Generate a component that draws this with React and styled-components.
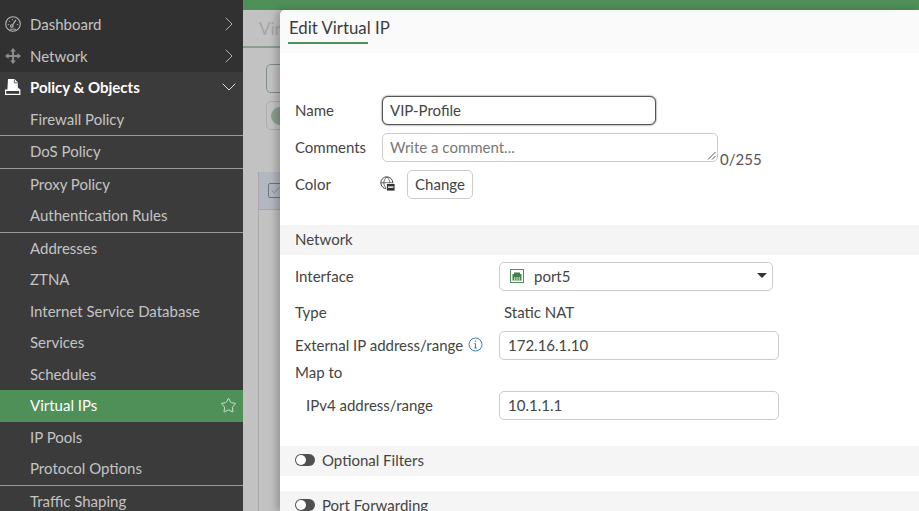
import React from "react";
import styled, { createGlobalStyle } from "styled-components";
import { ChevronRight, ChevronDown, Star, Check } from "lucide-react";

const GlobalStyle = createGlobalStyle`
  html, body {
    margin: 0;
    height: 511px;
    overflow: hidden;
    background: #fff;
    font-family: "Lato", "Liberation Sans", sans-serif;
  }
  * { box-sizing: border-box; }
`;

const Page = styled.div`
  display: flex;
  width: 919px;
  height: 511px;
  overflow: hidden;
`;

const Sidebar = styled.nav`
  flex: 0 0 243px;
  display: flex;
  flex-direction: column;
  background: #3b3b3b;
  overflow: hidden;
`;

const TopGroup = styled.div`
  background: #313131;
  padding-top: 9px;
`;

const NavRow = styled.div`
  flex: none;
  display: flex;
  align-items: center;
  height: ${(p) => (p.$line ? "32.5px" : "31.5px")};
  padding: 0 2px 1px ${(p) => (p.$sub ? "30px" : "5px")};
  font-size: 15px;
  color: ${(p) => (p.$active || p.$open ? "#fff" : "#c4c4c4")};
  font-weight: ${(p) => (p.$open ? 700 : 400)};
  background: ${(p) => (p.$active ? "#4f8f58" : "transparent")};
  border-bottom: ${(p) => (p.$line ? "1px solid #9a9a9a" : "none")};
`;

const NavIcon = styled.span`
  display: flex;
  width: 25px;
  color: ${(p) => p.$color};
`;

const NavLabel = styled.span`
  flex: 1;
`;

const Chevron = styled.span`
  display: flex;
  color: ${(p) => (p.$open ? "#e0e0e0" : "#b0b0b0")};
`;

const FavStar = styled.span`
  display: flex;
  margin-right: 4px;
  color: #e2f0e4;
`;

const Main = styled.main`
  flex: 1;
  position: relative;
  display: flex;
  flex-direction: column;
  background: #fff;
  overflow: hidden;
`;

const TopBar = styled.div`
  flex: 0 0 10px;
  background: #4f8f58;
`;

const TabBar = styled.div`
  flex: 0 0 38px;
  display: flex;
  align-items: center;
  padding-left: 16px;
  font-size: 17px;
  color: #d8dade;
  border-bottom: 2px solid #b5d0b8;
`;

const Toolbar = styled.div`
  display: flex;
  flex-direction: column;
  gap: 8px;
  padding: 16px 0 0 23px;
`;

const GhostButton = styled.div`
  width: 90px;
  height: 29px;
  border: 1px solid ${(p) => (p.$focus ? "#a8bcae" : "#e4e4e4")};
  border-radius: 5px;
  padding: 5px 4px;
`;

const GhostDot = styled.div`
  width: 18px;
  height: 18px;
  border-radius: 50%;
  background: #b5d3ba;
`;

const GhostTable = styled.div`
  margin: 42px 0 0 15px;
  flex: 1;
  border-left: 1px solid #dcdcdc;
  background: #fff;
`;

const GhostHead = styled.div`
  height: 38px;
  padding: 11px 0 0 9px;
  background: #ecf1fb;
  border-bottom: 1px solid #dcdcdc;
  border-radius: 3px 0 0 0;
`;

const GhostCheck = styled.div`
  display: flex;
  align-items: center;
  justify-content: center;
  width: 15px;
  height: 15px;
  color: #999;
  border: 1px solid #999;
  border-radius: 2px;
`;

const Backdrop = styled.div`
  position: absolute;
  inset: 10px 0 0 0;
  background: rgba(0, 0, 0, 0.24);
`;

const Modal = styled.section`
  position: absolute;
  top: 10px;
  left: 37px;
  right: 0;
  bottom: 0;
  display: flex;
  flex-direction: column;
  background: #fff;
  border-radius: 5px 0 0 0;
  box-shadow: -4px 0 7px rgba(0, 0, 0, 0.22);
  color: #444;
  font-size: 15px;
`;

const ModalHeader = styled.header`
  flex: 0 0 43px;
  display: flex;
  flex-direction: column;
  padding-left: 8px;
  background: #fafafa;
  border-radius: 5px 0 0 0;
`;

const Title = styled.h1`
  margin: 0;
  height: 32px;
  padding: 6px 0 0 1px;
  font-size: 16.8px;
  font-weight: 400;
  line-height: 24px;
  color: #3c3c3c;
`;

const TitleRule = styled.div`
  width: 80px;
  height: 2px;
  background: #4f8f58;
`;

const Form = styled.div`
  display: flex;
  flex-direction: column;
  padding-top: 43px;
`;

const Row = styled.div`
  display: flex;
  align-items: ${(p) => p.$align || "center"};
  height: ${(p) => p.$h}px;
  margin-bottom: ${(p) => p.$mb || 0}px;
  padding-left: 15px;
`;

const Label = styled.label`
  flex: 0 0 ${(p) => p.$w}px;
  display: flex;
  align-items: center;
  gap: 5px;
  padding-left: ${(p) => p.$indent || 0}px;
  padding-bottom: 2px;
  white-space: nowrap;
`;

const Field = styled.div`
  position: relative;
  display: flex;
  align-items: center;
  width: ${(p) => p.$w}px;
  height: 29px;
  padding: 0 7px 2px ${(p) => p.$pad || 7}px;
  background: #fff;
  border: 1px solid ${(p) => (p.$focus ? "#555" : "#ccc")};
  border-radius: ${(p) => (p.$focus ? 6 : 5)}px;
  box-shadow: ${(p) => (p.$focus ? "0 0 2px #444" : "none")};
  color: ${(p) => (p.$hint ? "#777" : "#444")};
`;

const Grip = styled.svg`
  position: absolute;
  right: 1px;
  bottom: 1px;
`;

const Counter = styled.span`
  align-self: flex-end;
  margin: 0 0 -6px 2px;
  color: #555;
`;

const ColorIcon = styled.svg`
  margin: 0 12px 2px 0;
  flex: none;
`;

const ChangeButton = styled.button`
  width: 66px;
  height: 29px;
  padding: 0 0 2px;
  background: #fff;
  border: 1px solid #ccc;
  border-radius: 5px;
  color: #444;
  font: inherit;
`;

const Band = styled.div`
  display: flex;
  align-items: center;
  gap: 7px;
  flex: none;
  height: 30px;
  margin-top: ${(p) => p.$mt || 0}px;
  margin-bottom: ${(p) => p.$mb || 0}px;
  padding: 0 0 2px 15px;
  background: #f5f5f5;
`;

const Toggle = styled.span`
  display: flex;
  align-items: center;
  width: 20px;
  height: 12px;
  padding: 1px;
  background: #505050;
  border-radius: 6px;
`;

const Knob = styled.span`
  width: 10px;
  height: 10px;
  background: #fff;
  border-radius: 50%;
`;

const PortName = styled.span`
  margin-left: 10px;
`;

const Caret = styled.span`
  margin-left: auto;
  margin-right: -2px;
  border-left: 5px solid transparent;
  border-right: 5px solid transparent;
  border-top: 5px solid #333;
`;

const PlainValue = styled.span`
  padding: 0 0 2px 5px;
`;

const DashboardIcon = () => (
  <svg width="16" height="16" viewBox="0 0 16 16" fill="none" stroke="currentColor" strokeWidth="1.1">
    <circle cx="8" cy="8" r="7.3" />
    <circle cx="6.8" cy="10" r="1.3" />
    <path d="M7.5 9L11 3.8" strokeWidth="1.2" />
    <path d="M2.8 8.6h1.3M4 5l1 .9M7.4 2.9v1.3M13.2 8.6h-1.3M5 13.2h6" strokeWidth="0.9" />
  </svg>
);

const NetworkIcon = () => (
  <svg width="16" height="16" viewBox="0 0 16 16" fill="currentColor">
    <path d="M8 0 L11 3.6 H9.1 V6.9 H12.4 V5 L16 8 L12.4 11 V9.1 H9.1 V12.4 H11 L8 16 L5 12.4 H6.9 V9.1 H3.6 V11 L0 8 L3.6 5 V6.9 H6.9 V3.6 H5 Z" />
  </svg>
);

const PolicyIcon = () => (
  <svg width="16" height="16" viewBox="0 0 16 16" fill="currentColor">
    <path d="M3 0H9.5L12.8 3.3V8.4L15.4 10.6V16H0V10.6H2.4Z" />
    <path d="M1.2 12H14.2V14.8H1.2Z" fill="#3b3b3b" />
    <path d="M9.4 0.6V3.8H12.6" fill="none" stroke="#3b3b3b" strokeWidth="0.8" />
  </svg>
);

const InfoIcon = () => (
  <svg width="15" height="15" viewBox="0 0 15 15" fill="none" stroke="#3f7fb5">
    <circle cx="7.5" cy="7.5" r="6.5" />
    <path d="M7.5 6.5V11M6.2 11h2.6M6.4 6.5h1.1" strokeWidth="1.1" />
    <circle cx="7.5" cy="4.2" r="0.7" fill="#3f7fb5" stroke="none" />
  </svg>
);

const PortIcon = () => (
  <svg width="14" height="14" viewBox="0 0 14 14">
    <rect x="0.5" y="0.5" width="13" height="13" fill="#fff" stroke="#4f8f58" />
    <path d="M2.5 11.5V5H4V3.5H10V5H11.5V11.5Z" fill="#3f7f49" />
    <path d="M4.5 11.5V8M6.2 11.5V8M7.9 11.5V8M9.6 11.5V8" stroke="#d8e8da" strokeWidth="0.8" />
  </svg>
);

const GlobeLockIcon = () => (
  <ColorIcon width="15" height="15" viewBox="0 0 15 15" fill="none" stroke="#444">
    <circle cx="6.8" cy="6.8" r="6" />
    <path d="M1 6.8h12M6.8 1c-4 3.5-4 8 0 11.6M6.8 1c4 3.5 4 8 0 11.6" strokeWidth="0.8" />
    <rect x="6.5" y="7.5" width="8.5" height="7.5" fill="#333" stroke="#fff" strokeWidth="0.8" />
    <rect x="8" y="10.4" width="5.5" height="1.4" fill="#fff" stroke="none" />
  </ColorIcon>
);

const ResizeGrip = () => (
  <Grip width="9" height="9" viewBox="0 0 9 9" stroke="#555">
    <path d="M1 8.5L8.5 1M5 8.5L8.5 5" />
  </Grip>
);

const subItems = [
  { label: "Firewall Policy", line: true },
  { label: "DoS Policy", line: true },
  { label: "Proxy Policy" },
  { label: "Authentication Rules", line: true },
  { label: "Addresses" },
  { label: "ZTNA" },
  { label: "Internet Service Database" },
  { label: "Services" },
  { label: "Schedules" },
  { label: "Virtual IPs", active: true },
  { label: "IP Pools" },
  { label: "Protocol Options", line: true },
  { label: "Traffic Shaping" },
];

const App = () => (
  <Page>
    <GlobalStyle />
    <Sidebar>
      <TopGroup>
        <NavRow>
          <NavIcon $color="#b8b8b8"><DashboardIcon /></NavIcon>
          <NavLabel>Dashboard</NavLabel>
          <Chevron><ChevronRight size={24} strokeWidth={1} /></Chevron>
        </NavRow>
        <NavRow>
          <NavIcon $color="#8c8c8c"><NetworkIcon /></NavIcon>
          <NavLabel>Network</NavLabel>
          <Chevron><ChevronRight size={24} strokeWidth={1} /></Chevron>
        </NavRow>
      </TopGroup>
      <NavRow $open>
        <NavIcon $color="#fff"><PolicyIcon /></NavIcon>
        <NavLabel>Policy &amp; Objects</NavLabel>
        <Chevron $open><ChevronDown size={24} strokeWidth={1} /></Chevron>
      </NavRow>
      {subItems.map((item) => (
        <NavRow key={item.label} $sub $line={item.line} $active={item.active}>
          <NavLabel>{item.label}</NavLabel>
          {item.active && <FavStar><Star size={17} strokeWidth={1.2} /></FavStar>}
        </NavRow>
      ))}
    </Sidebar>
    <Main>
      <TopBar />
      <TabBar>Vir</TabBar>
      <Toolbar>
        <GhostButton $focus />
        <GhostButton>
          <GhostDot />
        </GhostButton>
      </Toolbar>
      <GhostTable>
        <GhostHead>
          <GhostCheck><Check size={11} strokeWidth={1.5} /></GhostCheck>
        </GhostHead>
      </GhostTable>
      <Backdrop />
      <Modal>
        <ModalHeader>
          <Title>Edit Virtual IP</Title>
          <TitleRule />
        </ModalHeader>
        <Form>
          <Row $h={29} $mb={8}>
            <Label $w={87}>Name</Label>
            <Field $w={274} $focus>VIP-Profile</Field>
          </Row>
          <Row $h={29} $mb={8}>
            <Label $w={87}>Comments</Label>
            <Field $w={336} $hint>Write a comment...<ResizeGrip /></Field>
            <Counter>0/255</Counter>
          </Row>
          <Row $h={29} $mb={26}>
            <Label $w={85}>Color</Label>
            <GlobeLockIcon />
            <ChangeButton>Change</ChangeButton>
          </Row>
          <Band $mb={7}>Network</Band>
          <Row $h={29} $mb={7}>
            <Label $w={204}>Interface</Label>
            <Field $w={274} $pad={10}>
              <PortIcon />
              <PortName>port5</PortName>
              <Caret />
            </Field>
          </Row>
          <Row $h={29} $mb={4}>
            <Label $w={204}>Type</Label>
            <PlainValue>Static NAT</PlainValue>
          </Row>
          <Row $h={29}>
            <Label $w={204}>External IP address/range <InfoIcon /></Label>
            <Field $w={280} $pad={8}>172.16.1.10</Field>
          </Row>
          <Row $h={26} $mb={5}>
            <Label $w={204}>Map to</Label>
          </Row>
          <Row $h={29}>
            <Label $w={204} $indent={11}>IPv4 address/range</Label>
            <Field $w={280} $pad={8}>10.1.1.1</Field>
          </Row>
          <Band $mt={26}>
            <Toggle><Knob /></Toggle>
            Optional Filters
          </Band>
          <Band $mt={15}>
            <Toggle><Knob /></Toggle>
            Port Forwarding
          </Band>
        </Form>
      </Modal>
    </Main>
  </Page>
);

export default App;
